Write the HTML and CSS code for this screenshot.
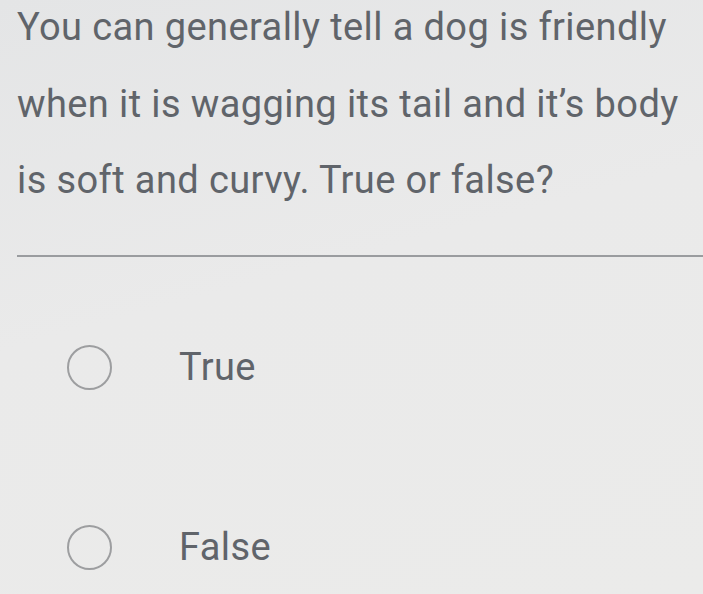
FILE: index.html
```html
<!DOCTYPE html>
<html>
<head>
<meta charset="utf-8">
<link rel="stylesheet" href="styles.css">
</head>
<body>
<div class="page">
  <p class="question">You can generally tell a dog is friendly<br>when it is wagging its tail and it’s body<br>is soft and curvy. True or false?</p>
  <hr class="rule">
  <div class="options">
    <label class="option"><span class="radio"></span><span class="label">True</span></label>
    <label class="option"><span class="radio"></span><span class="label">False</span></label>
  </div>
</div>
</body>
</html>
```
FILE: styles.css
```css
html, body {
  margin: 0;
  padding: 0;
  width: 703px;
  height: 594px;
  overflow: hidden;
}
body {
  background: linear-gradient(165deg, #e4e5e6 0%, #eaeaea 45%, #ebebea 100%);
  font-family: Roboto, "Noto Sans", sans-serif;
  color: #60646a;
}
.page {
  padding: 0 0 0 17px;
}
.question {
  margin: -11px 0 0 0;
  font-size: 38px;
  line-height: 76.5px;
  letter-spacing: 0.4px;
  white-space: nowrap;
}
.rule {
  margin: 36px 0 0 0;
  border: 0;
  border-top: 2px solid #9a9c9f;
  height: 0;
}
.options {
  display: flex;
  flex-direction: column;
  gap: 135px;
  padding-top: 88px;
}
.option {
  display: flex;
  align-items: center;
  height: 45px;
}
.radio {
  width: 45px;
  height: 45px;
  border: 2px solid #9d9ea0;
  border-radius: 50%;
  margin-left: 50px;
  box-sizing: border-box;
  flex: none;
}
.label {
  margin-left: 67px;
  font-size: 38px;
  letter-spacing: 0.4px;
}
```
